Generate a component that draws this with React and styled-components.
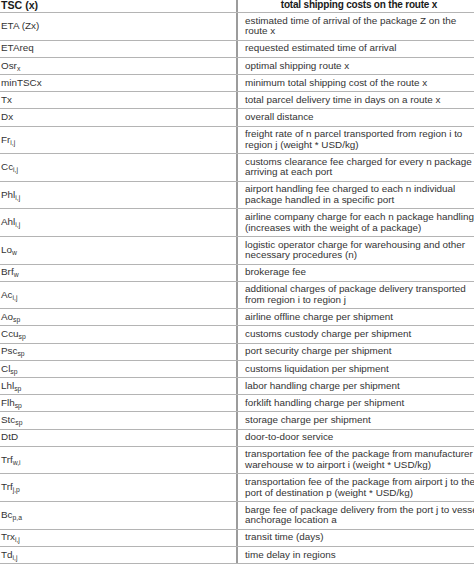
import React from "react";
import styled, { createGlobalStyle } from "styled-components";

const GlobalStyle = createGlobalStyle`
  html, body {
    margin: 0;
    padding: 0;
    background: #ffffff;
    overflow: hidden;
  }
  body {
    font-family: "Liberation Sans", Arial, sans-serif;
    color: #333333;
  }
`;

const Table = styled.div`
  width: 500px;
  display: flex;
  flex-direction: column;
`;

const Row = styled.div`
  display: grid;
  grid-template-columns: 236px 264px;
  border-bottom: 1.5px solid #b4b4b4;
  height: ${(p) => (p.$head ? 13 : p.$lines === 2 ? 27.6 : 17.2)}px;
  box-sizing: border-box;
`;

const Cell = styled.div`
  display: flex;
  flex-direction: column;
  justify-content: center;
  padding: ${(p) => (p.$right ? "0 0 0 7px" : "0 0 0 1px")};
  border-left: ${(p) => (p.$right ? "2px solid #9c9c9c" : "none")};
  font-size: 9.9px;
  line-height: 10.6px;
  white-space: nowrap;
  overflow: hidden;
`;

const HeadCell = styled(Cell)`
  justify-content: flex-start;
  align-items: ${(p) => (p.$right ? "center" : "flex-start")};
  padding-right: ${(p) => (p.$right ? "27px" : "0")};
  font-weight: bold;
  font-size: ${(p) => (p.$right ? "10px" : "10.6px")};
  letter-spacing: ${(p) => (p.$right ? "-0.2px" : "0")};
  line-height: 12px;
  color: #1a1a1a;
  margin-top: -1px;
`;

const Sub = styled.sub`
  font-size: 6.8px;
  line-height: 0;
  vertical-align: -2px;
`;

const rows = [
  ["ETA (Zx)", null, ["estimated time of arrival of the package Z on the", "route x"]],
  ["ETAreq", null, ["requested estimated time of arrival"]],
  ["Osr", "x", ["optimal shipping route x"]],
  ["minTSCx", null, ["minimum total shipping cost of the route x"]],
  ["Tx", null, ["total parcel delivery time in days on a route x"]],
  ["Dx", null, ["overall distance"]],
  ["Fr", "i,j", ["freight rate of n parcel transported from region i to", "region j (weight * USD/kg)"]],
  ["Cc", "i,j", ["customs clearance fee charged for every n package", "arriving at each port"]],
  ["Phl", "i,j", ["airport handling fee charged to each n individual", "package handled in a specific port"]],
  ["Ahl", "i,j", ["airline company charge for each n package handling", "(increases with the weight of a package)"]],
  ["Lo", "w", ["logistic operator charge for warehousing and other", "necessary procedures (n)"]],
  ["Brf", "w", ["brokerage fee"]],
  ["Ac", "i,j", ["additional charges of package delivery transported", "from region i to region j"]],
  ["Ao", "sp", ["airline offline charge per shipment"]],
  ["Ccu", "sp", ["customs custody charge per shipment"]],
  ["Psc", "sp", ["port security charge per shipment"]],
  ["Cl", "sp", ["customs liquidation per shipment"]],
  ["Lhl", "sp", ["labor handling charge per shipment"]],
  ["Flh", "sp", ["forklift handling charge per shipment"]],
  ["Stc", "sp", ["storage charge per shipment"]],
  ["DtD", null, ["door-to-door service"]],
  ["Trf", "w,i", ["transportation fee of the package from manufacturer", "warehouse w to airport i (weight * USD/kg)"]],
  ["Trf", "j,p", ["transportation fee of the package from airport j to the", "port of destination p (weight * USD/kg)"]],
  ["Bc", "p,a", ["barge fee of package delivery from the port j to vessel", "anchorage location a"]],
  ["Trx", "i,j", ["transit time (days)"]],
  ["Td", "i,j", ["time delay in regions"]],
];

export default function App() {
  return (
    <>
      <GlobalStyle />
      <Table>
        <Row $head>
          <HeadCell>TSC (x)</HeadCell>
          <HeadCell $right>total shipping costs on the route x</HeadCell>
        </Row>
        {rows.map(([sym, sub, lines], i) => (
          <Row key={i} $lines={lines.length}>
            <Cell>
              <span>
                {sym}
                {sub && <Sub>{sub}</Sub>}
              </span>
            </Cell>
            <Cell $right>
              {lines.map((l, j) => (
                <span key={j}>{l}</span>
              ))}
            </Cell>
          </Row>
        ))}
      </Table>
    </>
  );
}
